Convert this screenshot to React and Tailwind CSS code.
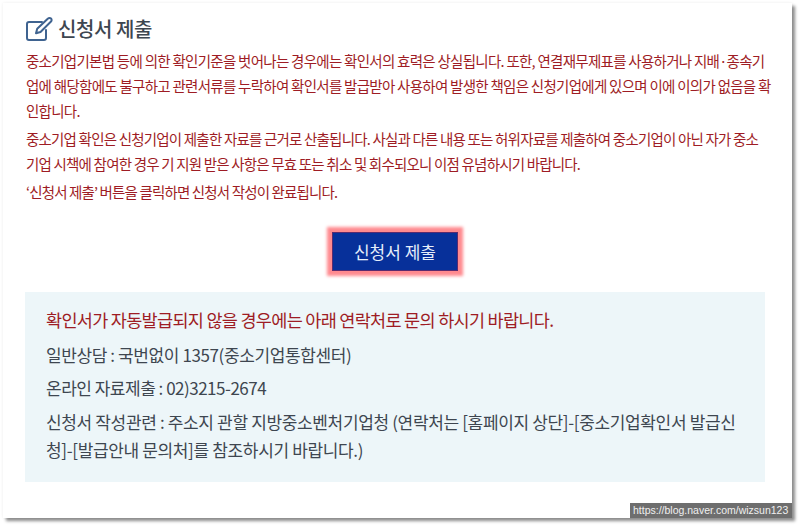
export default function App() {
  return (
    <div className="w-[800px] h-[526px] bg-white pt-[3px] pl-[3px] font-['Noto_Sans_CJK_KR','Noto_Sans',sans-serif] overflow-hidden">
      <div className="relative w-[789px] h-[515px] bg-white shadow-[3px_3px_3px_#8c8c8c,0_0_3px_#eeeeee] pl-[22px] pr-[26px] pt-[12px]">
        {/* Title */}
        <div className="flex items-center gap-[5px] h-[28px]">
          <svg width="28" height="26" viewBox="0 0 28 26" fill="none" stroke="#3f6390" strokeWidth="2" strokeLinecap="round" strokeLinejoin="round">
            <path d="M17 6H4a2 2 0 0 0-2 2v14a2 2 0 0 0 2 2h15a2 2 0 0 0 2-2V14" />
            <path d="M23 2.5a2.1 2.1 0 0 1 3 3L15.5 16l-4.5 1.2 1.2-4.5z" />
          </svg>
          <h2 className="text-[20px] font-medium text-[#3d4650] tracking-[-0.4px]">신청서 제출</h2>
        </div>

        {/* Notice */}
        <div className="mt-[5px] pl-px text-[14.5px] leading-[25px] text-[#9e1c24] tracking-[-0.72px] whitespace-nowrap">
          <p>
            중소기업기본법 등에 의한 확인기준을 벗어나는 경우에는 확인서의 효력은 상실됩니다. 또한, 연결재무제표를 사용하거나 지배·종속기
            <br />
            업에 해당함에도 불구하고 관련서류를 누락하여 확인서를 발급받아 사용하여 발생한 책임은 신청기업에게 있으며 이에 이의가 없음을 확
            <br />
            인합니다.
          </p>
          <p className="mt-[3px] tracking-[-0.8px]">
            중소기업 확인은 신청기업이 제출한 자료를 근거로 산출됩니다. 사실과 다른 내용 또는 허위자료를 제출하여 중소기업이 아닌 자가 중소
            <br />
            기업 시책에 참여한 경우 기 지원 받은 사항은 무효 또는 취소 및 회수되오니 이점 유념하시기 바랍니다.
          </p>
          <p className="mt-[3px] tracking-[-0.85px]">‘신청서 제출’ 버튼을 클릭하면 신청서 작성이 완료됩니다.</p>
        </div>

        {/* Submit button */}
        <div className="flex justify-center mt-[28px]">
          <button className="w-[126px] h-[39px] ml-[-1px] bg-[#07309a] border border-[#5a2a6e] text-[#e6eefa] text-[17px] shadow-[0_0_3px_5px_#ff8a8f]">
            신청서 제출
          </button>
        </div>

        {/* Contact box */}
        <div className="mt-[21px] w-[740px] h-[190px] bg-[#edf6f9] pl-[21px] pt-[14px] text-[17px] leading-[28px] text-[#3e4650] tracking-[-0.7px] whitespace-nowrap">
          <p className="text-[#9e1c24] text-[17.5px]">확인서가 자동발급되지 않을 경우에는 아래 연락처로 문의 하시기 바랍니다.</p>
          <p className="mt-[7px] tracking-[-0.4px]">일반상담 : 국번없이 1357(중소기업통합센터)</p>
          <p className="mt-[5px] tracking-[-0.5px]">온라인 자료제출 : 02)3215-2674</p>
          <p className="mt-[6px] tracking-[-0.35px]">
            신청서 작성관련 : 주소지 관할 지방중소벤처기업청 (연락처는 [홈페이지 상단]-[중소기업확인서 발급신
            <br />
            청]-[발급안내 문의처]를 참조하시기 바랍니다.)
          </p>
        </div>

        {/* Watermark */}
        <div className="absolute right-0 bottom-0 w-[162px] h-[15px] bg-[#6e6e6e] text-[#f0f0f0] text-[10.5px] leading-[15px] pl-[3px] font-['Liberation_Sans',sans-serif] whitespace-nowrap">
          https://blog.naver.com/wizsun123
        </div>
      </div>
    </div>
  );
}
